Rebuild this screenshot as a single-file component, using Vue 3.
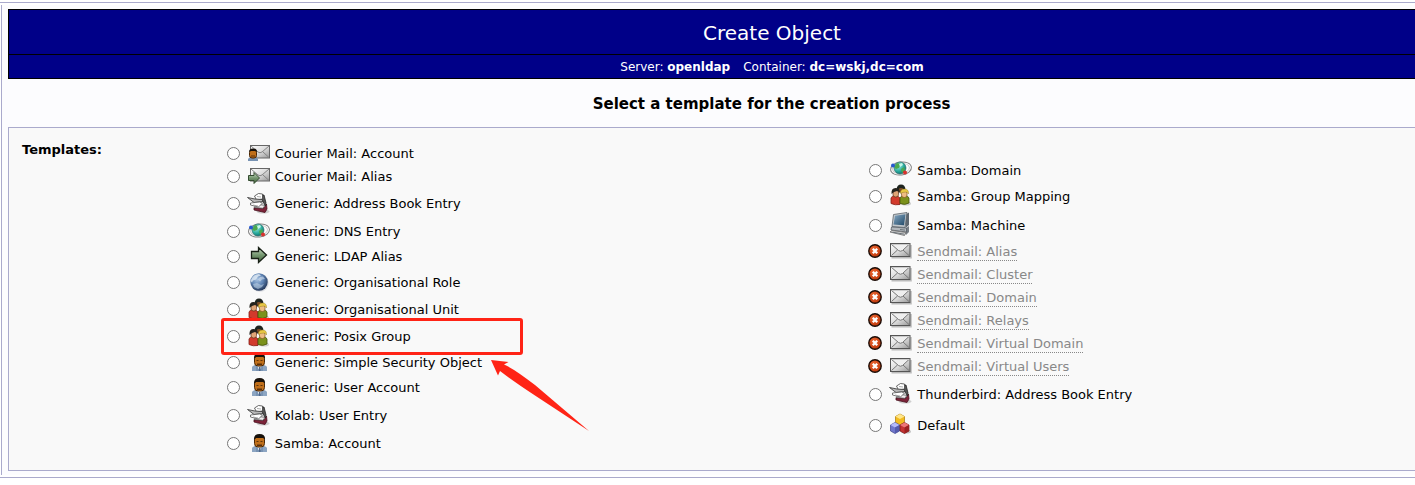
<script setup>
import { ref } from 'vue';

const selected = ref('');

const columns = [
  [
    { title: 'Courier Mail: Account', icon: 'mail-account' },
    { title: 'Courier Mail: Alias', icon: 'mail-alias' },
    { title: 'Generic: Address Book Entry', icon: 'book' },
    { title: 'Generic: DNS Entry', icon: 'dns' },
    { title: 'Generic: LDAP Alias', icon: 'arrow' },
    { title: 'Generic: Organisational Role', icon: 'globe' },
    { title: 'Generic: Organisational Unit', icon: 'group' },
    { title: 'Generic: Posix Group', icon: 'group', marked: true },
    { title: 'Generic: Simple Security Object', icon: 'user' },
    { title: 'Generic: User Account', icon: 'user' },
    { title: 'Kolab: User Entry', icon: 'book' },
    { title: 'Samba: Account', icon: 'user' }
  ],
  [
    { title: 'Samba: Domain', icon: 'dns' },
    { title: 'Samba: Group Mapping', icon: 'group' },
    { title: 'Samba: Machine', icon: 'machine' },
    { title: 'Sendmail: Alias', icon: 'mail', disabled: true },
    { title: 'Sendmail: Cluster', icon: 'mail', disabled: true },
    { title: 'Sendmail: Domain', icon: 'mail', disabled: true },
    { title: 'Sendmail: Relays', icon: 'mail', disabled: true },
    { title: 'Sendmail: Virtual Domain', icon: 'mail', disabled: true },
    { title: 'Sendmail: Virtual Users', icon: 'mail', disabled: true },
    { title: 'Thunderbird: Address Book Entry', icon: 'book' },
    { title: 'Default', icon: 'blocks' }
  ]
];

const idFor = (item) => item.title.toLowerCase().replace(/[^a-z]+/g, '-');
</script>

<template>
  <div class="page">
    <!-- icon shapes, shared by the rows below -->
    <svg class="sprite" aria-hidden="true">
      <defs>
        <linearGradient id="paper" x1="0" y1="0" x2="1" y2="1">
          <stop offset="0" stop-color="#fff" />
          <stop offset="0.5" stop-color="#dcdcdc" />
          <stop offset="1" stop-color="#989898" />
        </linearGradient>
        <linearGradient id="green" x1="0" y1="0" x2="0" y2="1">
          <stop offset="0" stop-color="#cfe0cb" />
          <stop offset="0.5" stop-color="#74966f" />
          <stop offset="1" stop-color="#46663f" />
        </linearGradient>
        <radialGradient id="earth" cx="0.4" cy="0.35" r="0.7">
          <stop offset="0" stop-color="#a9c4e2" />
          <stop offset="0.5" stop-color="#5f84b4" />
          <stop offset="1" stop-color="#1d2f50" />
        </radialGradient>
        <radialGradient id="ball" cx="0.35" cy="0.3" r="0.8">
          <stop offset="0" stop-color="#a5f0e4" />
          <stop offset="0.6" stop-color="#27a99b" />
          <stop offset="1" stop-color="#0b5f66" />
        </radialGradient>
        <radialGradient id="stop" cx="0.4" cy="0.35" r="0.7">
          <stop offset="0" stop-color="#ee6a35" />
          <stop offset="1" stop-color="#b93408" />
        </radialGradient>
        <linearGradient id="screen" x1="0" y1="0" x2="1" y2="1">
          <stop offset="0" stop-color="#86a9c4" />
          <stop offset="1" stop-color="#1f4766" />
        </linearGradient>
      </defs>

      <symbol id="icon-mail" viewBox="0 0 24 22">
        <path d="M2.500 16.800h19.500V4" fill="none" stroke="#bbb" stroke-width="1.500" />
        <rect x="1.500" y="2.500" width="19.500" height="13" fill="url(#paper)" stroke="#555" />
        <path d="M2.500 14.500l6-5.500M20 14.500L14 9" stroke="#777" fill="none" />
        <path d="M2 3l7.500 6.500q2 1.500 4 0L20.500 3" fill="#efefef" stroke="#777" />
        <path d="M2.500 3.500h17.500" stroke="#ccc" />
      </symbol>

      <symbol id="icon-user" viewBox="0 0 24 22">
        <path d="M5 19v-3q0-2 3-2.500h9q3 .5 3 2.500v3z" fill="#7893b3" />
        <path d="M5 15q2-2 4-2v6H5zM20 15q-2-2-4-2v6h4z" fill="#8ca5c2" />
        <path d="M10 13h5l-1.500 4h-2z" fill="#e1e6ed" />
        <path d="M12 15h1.500v4H12z" fill="#50688a" />
        <rect x="7.500" y="3" width="10" height="11" rx="3.500" fill="#c06f1a" stroke="#4a2705" />
        <path d="M7 7Q6.500 1 12.500 1T18 7l-1.500-2H9z" fill="#17110b" />
        <path d="M9.500 8.500h2M13.500 8.500h2" stroke="#5f350a" />
        <path d="M10 11.500h5v1.500h-5z" fill="#5b300a" />
      </symbol>

      <symbol id="icon-mail-account" viewBox="0 0 24 22">
        <rect x="3.500" y="2.500" width="19" height="12.500" fill="url(#paper)" stroke="#666" />
        <path d="M4 14.500L10 9M22 14.500L16 9M4 3l7 6q2 1.500 4 0l7-6" fill="none" stroke="#858585" />
        <path d="M1 18v-2q1-2 5-2t5 2v2z" fill="#7893b3" />
        <rect x="2.500" y="7" width="7" height="8" rx="2.500" fill="#c06f1a" stroke="#4a2705" />
        <path d="M2 9Q2 5.500 6 5.500T10 9L8.500 8h-5z" fill="#17110b" />
        <path d="M4 12.500h4v1H4z" fill="#5b300a" />
      </symbol>

      <symbol id="icon-mail-alias" viewBox="0 0 24 22">
        <rect x="3.500" y="2.500" width="19" height="12.500" fill="url(#paper)" stroke="#666" />
        <path d="M4 14.500L10 9M22 14.500L16 9M4 3l7 6q2 1.500 4 0l7-6" fill="none" stroke="#858585" />
        <path d="M1.500 9.500H7V6.500l5.500 5.500L7 17.500v-3H1.500z" fill="url(#green)" stroke="#334b2f" />
      </symbol>

      <symbol id="icon-arrow" viewBox="0 0 24 22">
        <path d="M4.500 5.500h7V1.500L19.500 9l-8 7.500v-4h-7z" fill="url(#green)" stroke="#182016" stroke-width="1.300" />
      </symbol>

      <symbol id="icon-book" viewBox="0 0 24 22">
        <ellipse cx="16" cy="18.500" rx="6.500" ry="2" fill="#cfcfcf" />
        <path d="M7 15l10 0 2.500-4 .5 5-2 3.500-11-2.500z" fill="#7d2339" stroke="#48101d" stroke-width=".8" />
        <path d="M7 14.500l9 .8 2-3-8-1z" fill="#f2eef0" stroke="#555" stroke-width=".8" />
        <path d="M14.500 2l1 6 3 5 .5-3-2-8z" fill="#555" stroke="#222" stroke-width=".8" />
        <path d="M7.500 3l4-2.500 4 .5v5l-6 1z" fill="#fff" stroke="#444" stroke-width=".8" />
        <path d="M.5 4.500L8 6l7 .5 1 2-9 1z" fill="#b9b9b9" stroke="#333" stroke-width=".8" />
        <path d="M3.500 10l9-1 3 1-4 4-8-2z" fill="#fff" stroke="#555" stroke-width=".8" />
        <path d="M6 12l5 1M10 3.500l4 .5" stroke="#999" stroke-width=".8" />
      </symbol>

      <symbol id="icon-dns" viewBox="0 0 24 22">
        <ellipse cx="12" cy="9.500" rx="10.500" ry="6.500" fill="#fff" stroke="#808080" transform="rotate(-8 12 9.500)" />
        <ellipse cx="12" cy="9.500" rx="8.500" ry="5" fill="none" stroke="#ccc" transform="rotate(-8 12 9.500)" />
        <circle cx="11" cy="9" r="6" fill="url(#ball)" stroke="#30716f" stroke-width=".7" />
        <path d="M8 4l4 1-2 4-3 1-2-2zM12 10l3-2 1 3-3 3z" fill="#4ca84f" />
        <path d="M10 5l3-1 1 2-3 2z" fill="#c6f6e9" />
        <circle cx="4" cy="6.500" r="2" fill="#2558cf" />
        <circle cx="16" cy="13.500" r="2" fill="#d8312c" />
      </symbol>

      <symbol id="icon-globe" viewBox="0 0 24 22">
        <circle cx="12.800" cy="10.800" r="9" fill="#dcdee2" />
        <circle cx="12" cy="10" r="8.700" fill="url(#earth)" />
        <path d="M5 6q3-4 7-4l2 1.500-3 1-2 3-3 1-1 2-1.500-1.500z" fill="#eaf1f8" opacity=".75" />
        <path d="M13 5l3-.5 2 2.500-3 .5-2 2-2-2z" fill="#dbe6f2" opacity=".55" />
        <path d="M6 12l4-1 4 2 3-1-2 3-4 2-4-2z" fill="#c6d8ea" opacity=".55" />
      </symbol>

      <symbol id="icon-group" viewBox="0 0 24 22">
        <ellipse cx="17" cy="18.500" rx="5" ry="2" fill="#ccc" />
        <path d="M7.500 4.500Q8-.5 12-.5t4.500 5l-2 3h-6z" fill="#1e241e" />
        <rect x="9.500" y="3" width="5" height="4" rx="2" fill="#7c4c26" />
        <path d="M2 18.500V13q1-2.500 4-2.500t5 2.500v6.500q-5 1-9-1z" fill="#d23a2c" stroke="#842017" stroke-width=".8" />
        <path d="M11 18.500V13q1-2.500 4.500-2.500T20 13v5q-4 2.500-9 .5z" fill="#7b911b" stroke="#48560b" stroke-width=".8" />
        <rect x="4" y="4.500" width="5.500" height="7.500" rx="2.500" fill="#dfa476" stroke="#5b321a" stroke-width=".7" />
        <path d="M2.500 9Q2 3 6.500 3t4 4L8 6 5 7z" fill="#25231e" />
        <rect x="12.500" y="6" width="5.500" height="6.500" rx="2.500" fill="#eebd84" stroke="#835324" stroke-width=".7" />
        <path d="M11.500 8.500q-.5-4.500 4-4.500t4 5l-2-2-4 .5z" fill="#e8c845" stroke="#8e741c" stroke-width=".4" />
      </symbol>

      <symbol id="icon-machine" viewBox="0 0 24 22">
        <path d="M16.500.500L20-1.500V11l-3.500 3z" fill="#5f6871" />
        <path d="M17 14l3-2v6l-3 3z" fill="#777e85" />
        <path d="M4.500.500L18-1.500 16 13.500l-13-1z" fill="#c3c8cc" stroke="#59626a" stroke-width=".8" />
        <path d="M6 1.800L16.500.300l-1.500 11-10.500-.8z" fill="url(#screen)" />
        <path d="M2.500 13l15 1v4L2 16z" fill="#b3b8bd" stroke="#555d64" stroke-width=".8" />
        <path d="M1 18l2-1.500 14 2-1.500 3z" fill="#d9d9d9" stroke="#666" stroke-width=".8" />
        <path d="M3.500 18.200l12 2M11 15.500l5 .6" stroke="#6b7379" />
      </symbol>

      <symbol id="icon-blocks" viewBox="0 0 24 22">
        <ellipse cx="17" cy="17.500" rx="5" ry="2" fill="#c4c4c4" />
        <path d="M11 0l4.500 2.500v6L11 11 6.500 8.500v-6z" fill="#f3bb20" stroke="#a87708" stroke-width=".7" />
        <path d="M11 0l4.500 2.500L11 5 6.500 2.500z" fill="#ffe68b" />
        <path d="M6 8.500l4.500 2.500v6L6 19.500 1.500 17v-6z" fill="#7077cc" stroke="#3d4388" stroke-width=".7" />
        <path d="M6 8.500l4.500 2.500L6 13.500 1.500 11z" fill="#b5bafa" />
        <path d="M6 13.500v6l4.500-2.500v-6z" fill="#555cae" />
        <path d="M15.500 8.500L20 11v6l-4.500 2.500L11 17v-6z" fill="#c53232" stroke="#741515" stroke-width=".7" />
        <path d="M15.500 8.500L20 11l-4.500 2.500L11 11z" fill="#ec7777" />
        <path d="M15.500 13.500v6L20 17v-6z" fill="#9c2020" />
      </symbol>
    </svg>

    <div class="frame">
      <header class="title-bar">
        <h1>Create Object</h1>
        <p class="subtitle">
          <span>Server: <b>openldap</b></span>
          <span>Container: <b>dc=wskj,dc=com</b></span>
        </p>
      </header>

      <h2>Select a template for the creation process</h2>

      <form class="templates" @submit.prevent>
        <div class="caption">Templates:</div>
        <ul v-for="(items, c) in columns" :key="c" class="column">
          <li v-for="item in items" :key="item.title" class="row" :class="'row-' + item.icon">
            <svg v-if="item.disabled" class="stop" viewBox="0 0 14 14">
              <circle cx="7" cy="7" r="6.200" fill="url(#stop)" stroke="#1b0c06" stroke-width="1.400" />
              <path d="M4.800 4.800l4.400 4.400M9.200 4.800L4.800 9.200" stroke="#fff" stroke-width="2.300" />
            </svg>
            <input v-else :id="idFor(item)" v-model="selected" type="radio" name="template" :value="item.title" />

            <svg class="icon"><use :href="'#icon-' + item.icon" /></svg>

            <span v-if="item.disabled" class="unavailable">{{ item.title }}</span>
            <label v-else :for="idFor(item)">{{ item.title }}</label>

            <template v-if="item.marked">
              <span class="marker"></span>
              <svg class="pointer" viewBox="0 0 98 72">
                <path d="M0 0l17.500 2-4.500 2.500Q22 8 44 25L98 71 44 35.500Q22 21 9 11l-2 4.500z" fill="#ff2416" />
              </svg>
            </template>
          </li>
        </ul>
      </form>
    </div>
  </div>
</template>

<style>
body {
  background: #fff;
}
</style>

<style scoped>
.page {
  font-family: Verdana, "DejaVu Sans", sans-serif;
  font-size: 13px;
  line-height: 16px;
  color: #000;
  margin-top: 2px;
  border-top: 1px solid #aaaacc;
  border-bottom: 1px solid #aaaacc;
  padding: 2px 0 2px 1px;
}

.sprite {
  position: absolute;
  width: 0;
  height: 0;
}

.frame {
  border-left: 1px solid #aaaacc;
  background: #fcfcfe;
  padding: 4px 0 4px 6px;
}

.title-bar {
  background: #000088;
  border: 1px solid #000;
  border-right: 0;
  color: #fff;
  text-align: center;
}

h1 {
  margin: 0;
  padding: 11px 0 9px 120px;
  font-size: 20px;
  line-height: 24px;
  font-weight: normal;
  border-bottom: 1px solid #000;
}

.subtitle {
  display: flex;
  justify-content: center;
  gap: 13px;
  margin: 0;
  padding: 4px 0 3px 120px;
  font-size: 12px;
}

h2 {
  margin: 17px 0 14px;
  padding-left: 120px;
  font-size: 15px;
  line-height: 17px;
  text-align: center;
}

.templates {
  display: grid;
  grid-template-columns: 15.2% 45.7% 1fr;
  align-items: center;
  padding: 14px 0;
  background: #f9f9f9;
  border: 1px solid #aaaacc;
  border-right: 0;
}

.caption {
  align-self: start;
  padding-left: 13px;
  font-weight: bold;
}

.column {
  list-style: none;
  margin: 0;
  padding: 0 0 0 4px;
}

.row {
  position: relative;
  display: flex;
  align-items: center;
  height: 25px;
}

.row-mail,
.row-mail-account,
.row-mail-alias {
  height: 23px;
}

.row-globe,
.row-group {
  height: 27px;
}

.row-book,
.row-machine,
.row-blocks {
  height: 31px;
}

input {
  width: 13px;
  height: 13px;
  margin: 0;
}

.stop {
  width: 14px;
  height: 14px;
  margin: 0 0 2px -1px;
}

.icon {
  width: 24px;
  height: 22px;
  margin: 0 4px 0 7px;
  overflow: visible;
}

.icon use,
symbol {
  overflow: visible;
}

.column + .column label {
  padding-top: 1px;
}

.unavailable {
  color: #888;
  padding-top: 1px;
  border-bottom: 1px dotted #888;
}

.marker {
  position: absolute;
  z-index: 1;
  top: -5px;
  left: -6px;
  width: 302px;
  height: 37px;
  box-sizing: border-box;
  border: 3px solid #ff2416;
  border-radius: 3px;
}

.pointer {
  position: absolute;
  z-index: 1;
  top: 37px;
  left: 264px;
  width: 98px;
  height: 72px;
}
</style>
